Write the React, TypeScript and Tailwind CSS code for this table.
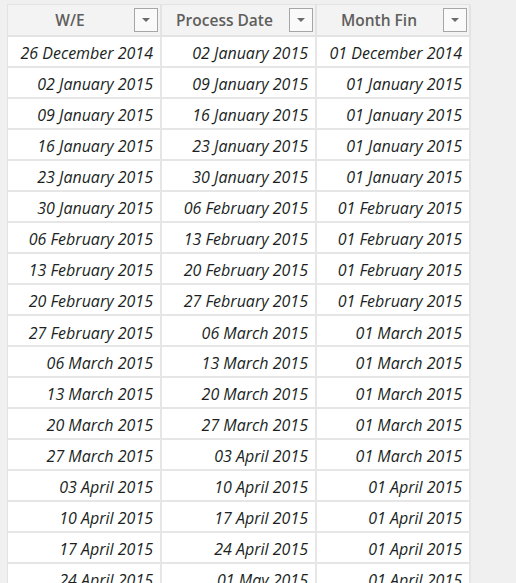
const rows: [string, string, string][] = [
  ["26 December 2014", "02 January 2015", "01 December 2014"],
  ["02 January 2015", "09 January 2015", "01 January 2015"],
  ["09 January 2015", "16 January 2015", "01 January 2015"],
  ["16 January 2015", "23 January 2015", "01 January 2015"],
  ["23 January 2015", "30 January 2015", "01 January 2015"],
  ["30 January 2015", "06 February 2015", "01 February 2015"],
  ["06 February 2015", "13 February 2015", "01 February 2015"],
  ["13 February 2015", "20 February 2015", "01 February 2015"],
  ["20 February 2015", "27 February 2015", "01 February 2015"],
  ["27 February 2015", "06 March 2015", "01 March 2015"],
  ["06 March 2015", "13 March 2015", "01 March 2015"],
  ["13 March 2015", "20 March 2015", "01 March 2015"],
  ["20 March 2015", "27 March 2015", "01 March 2015"],
  ["27 March 2015", "03 April 2015", "01 March 2015"],
  ["03 April 2015", "10 April 2015", "01 April 2015"],
  ["10 April 2015", "17 April 2015", "01 April 2015"],
  ["17 April 2015", "24 April 2015", "01 April 2015"],
  ["24 April 2015", "01 May 2015", "01 April 2015"],
];

const columns = ["W/E", "Process Date", "Month Fin"];

function FilterButton() {
  return (
    <div className="flex h-6 w-6 shrink-0 items-center justify-center border border-[#a6a6a6] bg-[#fafafa]">
      <svg width="10" height="6" viewBox="0 0 10 6">
        <path d="M1 1 L9 1 L5 5 Z" fill="#6b6b6b" />
      </svg>
    </div>
  );
}

export default function App() {
  return (
    <div
      className="h-[583px] w-[516px] overflow-hidden bg-[#f0f0f0] pl-[7px] pt-[4px]"
      style={{ fontFamily: '"Open Sans", "Noto Sans", sans-serif' }}
    >
      <div className="w-[463px] border-l border-t border-[#e3e3e3]">
        <div className="grid h-[32px] grid-cols-[154px_155px_154px] bg-[#f3f3f3]">
          {columns.map((c) => (
            <div key={c} className="flex items-center border-b-2 border-r-2 border-[#e3e3e3] pr-[2px]">
              <div className="flex-1 pr-[2px] pt-[2px] text-center text-[15.5px] font-semibold text-[#5f5e5c]">{c}</div>
              <FilterButton />
            </div>
          ))}
        </div>

        {rows.map((r, i) => (
          <div key={i} className="grid h-[31px] grid-cols-[154px_155px_154px] bg-white">
            {r.map((v, j) => (
              <div
                key={j}
                className={
                  "flex justify-end whitespace-nowrap border-b-2 border-r-2 border-[#e6e6e6] pr-[7px] text-[16px] italic text-[#201f1e] " +
                  (i === 9 ? "items-end pb-0" : "items-center pt-[2px]")
                }
              >
                {v}
              </div>
            ))}
          </div>
        ))}
      </div>
    </div>
  );
}
